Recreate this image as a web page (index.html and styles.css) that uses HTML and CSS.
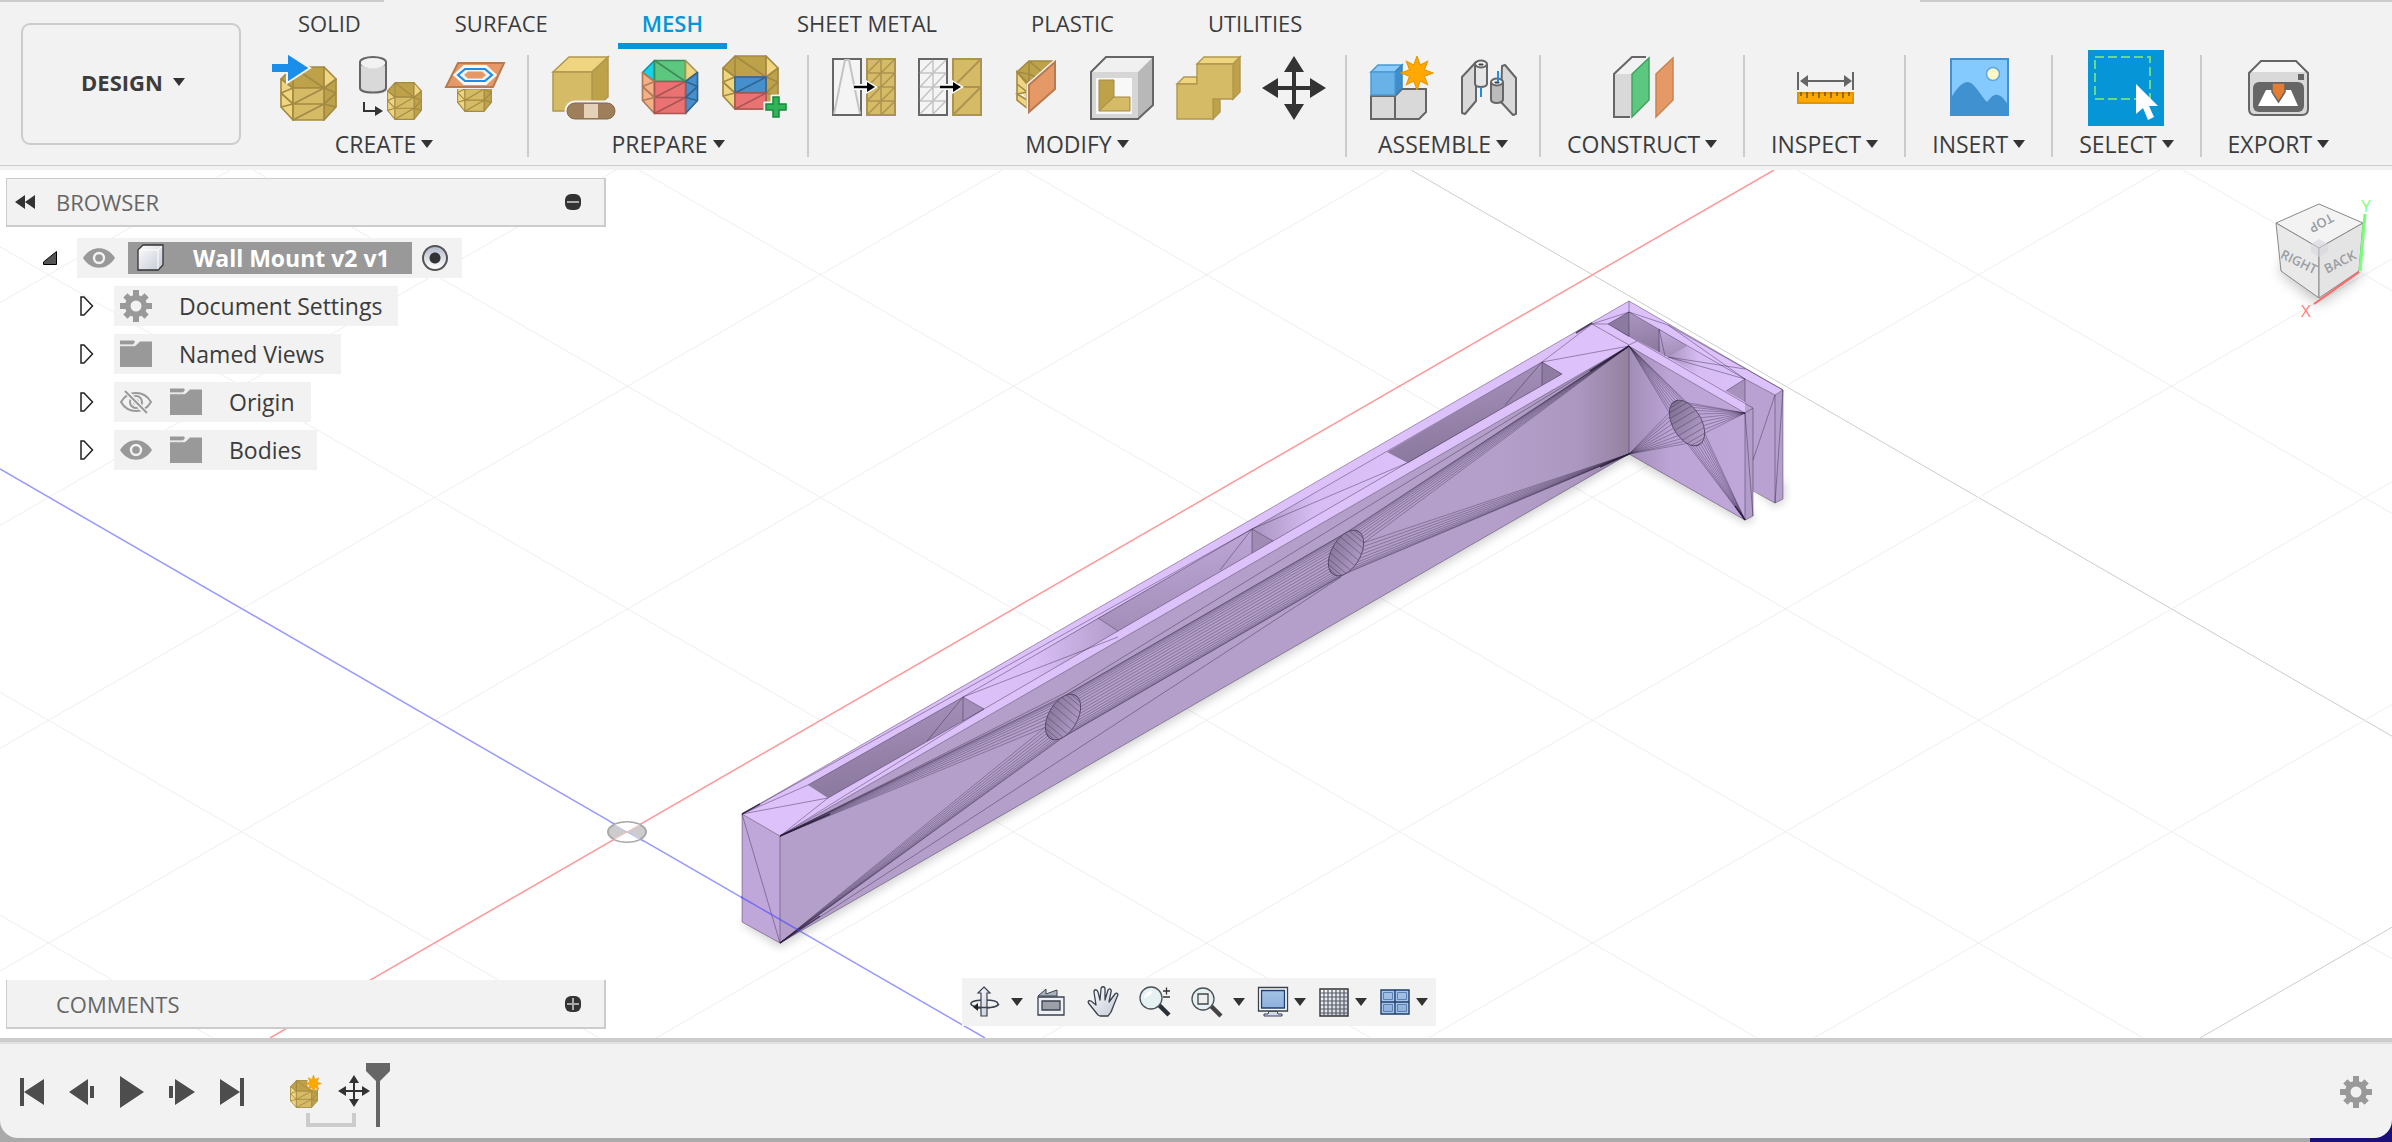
FILE: index.html
```html
<!DOCTYPE html>
<html lang="en">
<head>
<meta charset="utf-8">
<title>Wall Mount v2</title>
<link rel="stylesheet" href="styles.css">
</head>
<body>
<svg class="defs" aria-hidden="true">
  <defs>
    <symbol id="barrel" viewBox="-1 -1 57 55" preserveAspectRatio="none">
      <g stroke="#a38a42" stroke-width="1.7" stroke-linejoin="round">
        <path fill="#bda24a" d="M12 0H43V21H12ZM0 12L12 0V21ZM55 12L43 21V53L55 40Z"/>
        <path fill="#f0d580" d="M43 0L55 12L43 21ZM0 12L12 21V53L0 40Z"/>
        <path fill="#d6bb66" d="M12 21H43V53H12Z"/>
        <path fill="none" d="M12 0L43 21M12 37H43M12 37L43 21M12 53L43 37M12 21L0 26L12 37L0 40M55 26L43 21M55 26L43 37L55 40"/>
      </g>
    </symbol>
    <symbol id="move" viewBox="0 0 64 64">
      <path fill="#333" d="M32 0L42 16H34V30H48V22L64 32L48 42V34H34V48H42L32 64L22 48H30V34H16V42L0 32L16 22V30H30V16H22Z"/>
    </symbol>
    <symbol id="star" viewBox="-16 -16 32 32">
      <path fill="#ffa800" stroke="#e59500" stroke-width="1" d="M0 -16L3 -7.5L10 -11L7 -3L15 0L7 3L10 11L3 7.5L0 16L-3 7.5L-10 11L-7 3L-15 0L-7 -3L-10 -11L-3 -7.5Z"/>
    </symbol>
    <symbol id="gear" viewBox="-16 -16 32 32">
      <g fill="#999"><circle r="11"/><rect x="-3" y="-16" width="6" height="32"/><rect x="-16" y="-3" width="32" height="6"/>
      <rect x="-3" y="-15" width="6" height="30" transform="rotate(45)"/><rect x="-3" y="-15" width="6" height="30" transform="rotate(-45)"/></g>
      <circle r="5.5" fill="#f2f2f2"/>
    </symbol>
    <symbol id="folder" viewBox="0 0 32 32">
      <path fill="#999" d="M0 8H15L20 3.5H32V29H0Z"/><path fill="#999" d="M0 2.500H14L15 4L13 6.500H0Z"/><path d="M0 7.500H14.500L19 3.500" fill="none" stroke="#e8e8e8" stroke-width="1.500"/>
    </symbol>
    <symbol id="eye" viewBox="0 0 32 32">
      <path fill="#999" d="M0 16C8 3 24 3 32 16C24 29 8 29 0 16Z"/><circle cx="16" cy="16" r="5" fill="none" stroke="#f2f2f2" stroke-width="2.400"/>
    </symbol>
    <symbol id="caret" viewBox="0 0 12 8"><path fill="#333" d="M0 0H12L6 8Z"/></symbol>
    <symbol id="twist" viewBox="0 0 14 20"><path fill="#fff" stroke="#222" stroke-width="1.500" d="M1 1H4L12.500 10L4 19H1Z"/></symbol>
    <linearGradient id="silver" x1="0" y1="0" x2="1" y2="1"><stop offset="0" stop-color="#fff"/><stop offset="1" stop-color="#c3c8d4"/></linearGradient>
    <linearGradient id="screen" x1="0" y1="0" x2="0" y2="1"><stop offset="0" stop-color="#a5c2e5"/><stop offset="1" stop-color="#8eb0dc"/></linearGradient>
  </defs>
</svg>

<div class="window">
<header class="header">
  <button class="workspace" type="button">DESIGN <svg class="caret"><use href="#caret"/></svg></button>
  <div class="ribbon">
    <nav class="tabs">
      <a class="tab" href="#solid">SOLID</a>
      <a class="tab" href="#surface">SURFACE</a>
      <a class="tab active" href="#mesh">MESH</a>
      <a class="tab" href="#sheet">SHEET METAL</a>
      <a class="tab" href="#plastic">PLASTIC</a>
      <a class="tab" href="#utilities">UTILITIES</a>
    </nav>
    <div class="groups">
      <section class="group">
        <div class="tools">
          <button class="tool" type="button" aria-label="Insert mesh"><svg viewBox="0 0 76 76"><use href="#barrel" x="14" y="16" width="57" height="55"/><path fill="#1a8ee8" stroke="#f2f2f2" stroke-width="2" d="M5 13H21V3L44 18L21 33V23H5Z"/></svg></button>
          <button class="tool" type="button" aria-label="Tessellate"><svg viewBox="0 0 76 76"><path fill="#d9d9d9" stroke="#666" stroke-width="2" d="M8 12V38C8 44 34 44 34 38V12"/><ellipse cx="21" cy="12" rx="13" ry="5" fill="#f2f2f2" stroke="#666" stroke-width="2"/><path fill="#f2f2f2" d="M9 12H33V14C30 20 12 20 9 14Z"/><path fill="none" stroke="#333" stroke-width="2" d="M12 52V61H25"/><path fill="#333" d="M23 56L31 61L23 66Z"/><use href="#barrel" x="35" y="32" width="35" height="38"/></svg></button>
          <button class="tool" type="button" aria-label="Mesh section sketch"><svg viewBox="0 0 76 76"><svg x="19" y="39" width="35" height="23" viewBox="-1 21 57 33" preserveAspectRatio="none"><use href="#barrel" x="-1" y="-1" width="57" height="55"/></svg><path fill="#e59966" stroke="#b87a50" stroke-width="2" d="M20 13H66L55 37H8Z"/><path fill="none" stroke="#f8f8f8" stroke-width="7" d="M20 25L27 18.500H47L54 25L47 31.500H27Z"/><path fill="#f2f2f2" stroke="#1a8ee8" stroke-width="2.200" d="M20 25L27 19H47L54 25L47 31H27Z"/><path fill="#e59966" d="M26 25L30 21.500H44L48 25L44 28.500H30Z"/></svg></button>
        </div>
        <button class="group-label" type="button">CREATE<svg class="caret"><use href="#caret"/></svg></button>
      </section>
      <span class="sep"></span>
      <section class="group">
        <div class="tools">
          <button class="tool" type="button" aria-label="Repair"><svg viewBox="0 0 76 76"><g stroke="#b0984f" stroke-width="1.500"><path fill="#f0d580" d="M7 22L23 7H62L46 22Z"/><path fill="#bda24a" d="M62 7V47L46 61V22Z"/><path fill="#d6bb66" d="M7 22H46V61H7Z"/></g><rect x="20" y="52" width="50" height="18" rx="9" fill="#9e7f5c" stroke="#f2f2f2" stroke-width="3"/><rect x="21" y="53" width="48" height="16" rx="8" fill="#9e7f5c" stroke="#85694a"/><path fill="#e5d0b8" d="M38 54H52V68H38Z"/></svg></button>
          <button class="tool" type="button" aria-label="Generate face groups"><svg viewBox="0 0 76 76"><g transform="translate(10.500,10.500)" stroke-width="1.700" stroke-linejoin="round"><path fill="#14d3e8" stroke="#1394a3" d="M0 12L12 0V21Z"/><path fill="#5cc77e" stroke="#3f8c58" d="M12 0H43V21H12Z"/><path fill="#f0d580" stroke="#a8955a" d="M43 0L55 12L43 21Z"/><path fill="#f5b184" stroke="#ac7c5d" d="M0 12L12 21V53L0 40Z"/><path fill="#4590cc" stroke="#2f6590" d="M55 12L43 21V53L55 40Z"/><path fill="#eb7272" stroke="#a85555" d="M12 21H43V53H12Z"/><path fill="none" stroke="#a85555" d="M12 37H43M12 37L43 21M12 53L43 37"/><path fill="none" stroke="#3f8c58" d="M12 0L43 21"/><path fill="none" stroke="#ac7c5d" d="M12 21L0 26L12 37L0 40"/><path fill="none" stroke="#2f6590" d="M43 21L55 26L43 37L55 40"/></g></svg></button>
          <button class="tool" type="button" aria-label="Combine face groups"><svg viewBox="0 0 76 76"><use href="#barrel" x="4" y="5" width="57" height="55"/><path fill="#4590cc" stroke="#2f6590" stroke-width="1.500" d="M17 27H48V43H17ZM17 43L48 27"/><path fill="#eb7272" stroke="#a85555" stroke-width="1.500" d="M17 43H48V59H17ZM17 59L48 43"/><path fill="#2fb457" stroke="#f2f2f2" stroke-width="5" d="M55 47H61V54H68V60H61V67H55V60H48V54H55Z"/><path fill="#2fb457" stroke="#16883a" stroke-width="1.500" d="M55 47H61V54H68V60H61V67H55V60H48V54H55Z"/></svg></button>
        </div>
        <button class="group-label" type="button">PREPARE<svg class="caret"><use href="#caret"/></svg></button>
      </section>
      <span class="sep"></span>
      <section class="group">
        <div class="tools">
          <button class="tool" type="button" aria-label="Remesh"><svg viewBox="0 0 76 76"><path fill="#f4f4f4" stroke="#666" stroke-width="2" d="M7 9H35V65H7Z"/><path fill="none" stroke="#c4c4c4" stroke-width="2" d="M8 64L19 10H23L34 64"/><path fill="#d6bb66" stroke="#ab9452" stroke-width="2" d="M41 9H69V65H41Z"/><path fill="none" stroke="#ab9452" stroke-width="1.500" d="M55 9V65M41 23H69M41 37H69M41 51H69M41 23L55 9M55 23L69 9M41 37L55 23M55 37L69 23M41 51L55 37M55 51L69 37M41 65L55 51M55 65L69 51"/><path stroke="#fff" stroke-width="6" d="M28 37H46"/><path fill="#fff" d="M40 30L52 37L40 44Z"/><path stroke="#000" stroke-width="2.500" d="M28 37H44"/><path fill="#000" d="M41 32L49 37L41 42Z"/></svg></button>
          <button class="tool" type="button" aria-label="Reduce"><svg viewBox="0 0 76 76"><path fill="#f4f4f4" stroke="#666" stroke-width="2" d="M7 9H35V65H7Z"/><path fill="none" stroke="#c4c4c4" stroke-width="1.500" d="M21 10V64M8 23H34M8 37H34M8 51H34M8 23L21 10M21 23L34 10M8 37L21 23M21 37L34 23M8 51L21 37M21 51L34 37M8 64L21 51M21 64L34 51"/><path fill="#d6bb66" stroke="#ab9452" stroke-width="2" d="M41 9H69V65H41ZM41 37H69M41 37L69 9M41 65L69 37"/><path stroke="#fff" stroke-width="6" d="M28 37H46"/><path fill="#fff" d="M40 30L52 37L40 44Z"/><path stroke="#000" stroke-width="2.500" d="M28 37H44"/><path fill="#000" d="M41 32L49 37L41 42Z"/></svg></button>
          <button class="tool" type="button" aria-label="Plane cut"><svg viewBox="0 0 76 76"><g stroke="#a38a42" stroke-width="1.600"><path fill="#bda24a" d="M19 22L31 11H57L31 34Z"/><path fill="none" d="M31 11V33M31 11L44 22M31 24L40 28M19 22L31 24"/><path fill="#f0d580" d="M19 22L29 34V58L19 50ZM19 34L29 42L19 44L29 50"/></g><path fill="#e59966" stroke="#f2f2f2" stroke-width="5" d="M31 35L57 12V39L31 62Z"/><path fill="#e59966" stroke="#b87a50" stroke-width="2" d="M31 35L57 12V39L31 62Z"/></svg></button>
          <button class="tool" type="button" aria-label="Shell"><svg viewBox="0 0 76 76"><path fill="#f0f0f0" d="M7 22L22 7H69L54 22Z"/><path fill="#b8b8b8" d="M69 7V55L54 69V22Z"/><path fill="#d6d6d6" d="M7 22H54V69H7Z"/><path fill="none" stroke="#666" stroke-width="2" d="M7 22L22 7H69V55L54 69H7Z"/><path fill="#f8f8f8" d="M12 28H48V64H12Z"/><path fill="#bda24a" stroke="#a38a42" d="M15 30H30V47L15 61Z"/><path fill="#d6bb66" stroke="#a38a42" d="M30 47H46V61H15Z"/></svg></button>
          <button class="tool" type="button" aria-label="Combine"><svg viewBox="0 0 76 76"><g stroke="#b0984f" stroke-width="1.400"><path fill="#f0d580" d="M27 14L34 7H70L63 14ZM7 34L14 27H27V34Z"/><path fill="#bda24a" d="M70 7V42L63 49V14ZM43 49H50V62L43 69Z"/><path fill="#d6bb66" d="M27 14H63V49H43V69H7V34H27Z"/></g></svg></button>
          <button class="tool" type="button" aria-label="Move"><svg viewBox="0 0 76 76"><use href="#move" x="6" y="6" width="64" height="64"/></svg></button>
        </div>
        <button class="group-label" type="button">MODIFY<svg class="caret"><use href="#caret"/></svg></button>
      </section>
      <span class="sep"></span>
      <section class="group">
        <div class="tools">
          <button class="tool" type="button" aria-label="New component"><svg viewBox="0 0 76 76"><path fill="#f2f2f2" d="M31 46L38 39H62L55 46Z"/><path fill="#b8b8b8" d="M62 39V62L55 69V46Z"/><path fill="#d9d9d9" stroke="#666" stroke-width="2" d="M7 46H31V69H7ZM31 46V69H55L62 62V39H38L31 46"/><path fill="#8bcafb" stroke="#4a9ad4" stroke-width="1.500" d="M7 22L14 15H38L31 22Z"/><path fill="#3d8ecb" stroke="#3a82bb" stroke-width="1.500" d="M38 15V38L31 45V22Z"/><path fill="#68b2e8" stroke="#4a9ad4" stroke-width="1.500" d="M7 22H31V45H7Z"/><circle cx="53" cy="23" r="13" fill="#f2f2f2"/><use href="#star" x="36" y="6" width="34" height="34"/></svg></button>
          <button class="tool" type="button" aria-label="Joint"><svg viewBox="0 0 76 76"><g stroke="#666" stroke-width="2" stroke-linejoin="round"><path fill="#d9d9d9" d="M12 27L26 12V51L15 64L12 63Z"/><path fill="#e6e6e6" d="M25 14V34C26 38 36 38 37 34V14"/><ellipse cx="31" cy="14" rx="6" ry="3.500" fill="#f2f2f2"/><path fill="#d9d9d9" d="M52 16L55 15L66 28V64L63 65L51 52Z"/><path fill="#bbb" d="M41 32V50C42 54 51 54 53 50V32"/><ellipse cx="47" cy="32" rx="6" ry="3.500" fill="#f2f2f2"/></g><path fill="#444" d="M29 14H33V15H29ZM45 32H49V33H45Z" stroke="#444"/><path stroke="#1a8ee8" stroke-width="2" d="M31 37V47M48 21V32"/></svg></button>
        </div>
        <button class="group-label" type="button">ASSEMBLE<svg class="caret"><use href="#caret"/></svg></button>
      </section>
      <span class="sep"></span>
      <section class="group">
        <div class="tools">
          <button class="tool" type="button" aria-label="Offset plane"><svg viewBox="0 0 76 76"><path fill="#f2f2f2" d="M10 24L28 7H45L27 24Z"/><path fill="#d9d9d9" d="M10 24H27V67H10Z"/><path fill="none" stroke="#666" stroke-width="2" d="M42 7H28L10 24V67H26"/><path fill="#5cc77e" stroke="#3fa360" stroke-width="1.500" d="M28 24L45 8V50L28 67Z"/><path fill="#e59966" stroke="#c98250" stroke-width="1.500" d="M52 24L69 8V50L52 67Z"/></svg></button>
        </div>
        <button class="group-label" type="button">CONSTRUCT<svg class="caret"><use href="#caret"/></svg></button>
      </section>
      <span class="sep"></span>
      <section class="group">
        <div class="tools">
          <button class="tool" type="button" aria-label="Measure"><svg viewBox="0 0 76 76"><path stroke="#666" stroke-width="2" d="M11 22V40M66 22V40M18 31H60"/><path fill="#666" d="M13 31L21 25V37ZM65 31L57 25V37Z"/><path fill="#ffa800" stroke="#e09400" stroke-width="2" d="M11 43H66V53H11Z"/><path stroke="#6b5a33" stroke-width="1.500" d="M14 42V46M20 42V48M26 42V46M32 42V48M38 42V46M44 42V48M50 42V46M56 42V48M62 42V46"/></svg></button>
        </div>
        <button class="group-label" type="button">INSPECT<svg class="caret"><use href="#caret"/></svg></button>
      </section>
      <span class="sep"></span>
      <section class="group">
        <div class="tools">
          <button class="tool" type="button" aria-label="Insert image"><svg viewBox="0 0 76 76"><path fill="#85caff" stroke="#3f92cf" stroke-width="2" d="M10 9H67V65H10Z"/><circle cx="52" cy="24" r="6.500" fill="#fdf8c8" stroke="#5fa8dd" stroke-width="1.500"/><path fill="#3f92cf" d="M10 48C17 36 22 32 27 32C34 33 39 45 46 52C51 46 53 44 57 45C61 46 64 50 67 55V65H10Z"/></svg></button>
        </div>
        <button class="group-label" type="button">INSERT<svg class="caret"><use href="#caret"/></svg></button>
      </section>
      <span class="sep"></span>
      <section class="group">
        <div class="tools">
          <button class="tool selected" type="button" aria-label="Select"><svg viewBox="0 0 76 76"><rect x="7" y="7" width="55" height="42" fill="none" stroke="#67d98b" stroke-width="2" stroke-dasharray="9 4"/><path fill="#fff" d="M48 34V64L55 58L60 70L66 67L61 56L70 56Z"/></svg></button>
        </div>
        <button class="group-label" type="button">SELECT<svg class="caret"><use href="#caret"/></svg></button>
      </section>
      <span class="sep"></span>
      <section class="group">
        <div class="tools">
          <button class="tool" type="button" aria-label="3D print"><svg viewBox="0 0 76 76"><path fill="#d9d9d9" d="M9 22H68V59C68 63 66 65 62 65H15C11 65 9 63 9 59Z"/><path fill="#f6f6f6" d="M9 22L21 11H56L68 22Z"/><path fill="none" stroke="#666" stroke-width="2" d="M9 23L21 11H56L68 23V59C68 63 66 65 62 65H15C11 65 9 63 9 59Z"/><rect x="13" y="32" width="51" height="30" rx="6" fill="#666"/><path fill="#666" d="M58 24H64V30H58Z"/><path fill="#fff" d="M18 56L26 40H51L58 56Z"/><path fill="#e57c33" stroke="#666" stroke-width="1.500" d="M32 33H45V42L38.500 52L32 42Z"/></svg></button>
        </div>
        <button class="group-label" type="button">EXPORT<svg class="caret"><use href="#caret"/></svg></button>
      </section>
    </div>
  </div>
</header>

<main class="canvas">
  <svg class="scene" viewBox="0 170 2392 868" preserveAspectRatio="xMinYMin slice" role="img" aria-label="Wall mount model">
    <defs>
      <linearGradient id="deep" x1="0" y1="0" x2="0.300" y2="1"><stop offset="0" stop-color="#ab96c1"/><stop offset="1" stop-color="#8a779c"/></linearGradient>
      <linearGradient id="ramp" x1="0" y1="0" x2="1" y2="0"><stop offset="0" stop-color="#dcc1fa"/><stop offset="0.450" stop-color="#d9bef6"/><stop offset="1" stop-color="#b39dcb"/></linearGradient>
      <linearGradient id="ramp2" x1="0" y1="0" x2="1" y2="0"><stop offset="0" stop-color="#a894bf"/><stop offset="0.400" stop-color="#d6bcf3"/><stop offset="1" stop-color="#dcc1fa"/></linearGradient>
      <linearGradient id="mid" x1="0" y1="0" x2="0.200" y2="1"><stop offset="0" stop-color="#c3abde"/><stop offset="1" stop-color="#a28eb7"/></linearGradient>
      <linearGradient id="front" gradientUnits="userSpaceOnUse" x1="1500" y1="0" x2="1629" y2="0"><stop offset="0" stop-color="#b49fca"/><stop offset="0.600" stop-color="#ac97c1"/><stop offset="1" stop-color="#94819f"/></linearGradient>
      <linearGradient id="arm" gradientUnits="userSpaceOnUse" x1="1629" y1="0" x2="1745" y2="0"><stop offset="0" stop-color="#a18db6"/><stop offset="0.350" stop-color="#bca4d6"/><stop offset="1" stop-color="#c0a7da"/></linearGradient>
      <linearGradient id="bore" x1="0" y1="0" x2="1" y2="0.600"><stop offset="0" stop-color="#7d6d90"/><stop offset="1" stop-color="#b09bc6"/></linearGradient>
      <filter id="soft" x="-5%" y="-5%" width="110%" height="110%"><feGaussianBlur stdDeviation="4"/></filter>
      <filter id="cubeshade" x="-50%" y="-50%" width="200%" height="200%"><feGaussianBlur stdDeviation="7"/></filter>
    </defs>
    <g id="grid" fill="none"></g>
    <path stroke="#f99" stroke-width="1.500" d="M1774 170L270 1038"/>
    <path stroke="#99f" stroke-width="1.500" d="M0 469L985 1038"/>
    <g fill="none"><ellipse cx="627" cy="832" rx="19" ry="10" stroke="#aaa" stroke-width="2" fill="#ccc"/><path fill="#fff" d="M627 832L614 825Q627 820 640 825ZM627 832L614 839Q627 844 640 839Z"/><path stroke="#99f" stroke-opacity="0.600" d="M610 822L644 842"/><path stroke="#f99" stroke-opacity="0.600" d="M610 842L644 822"/></g>

    <g filter="url(#soft)" fill="#000" opacity="0.170"><path d="M738 922L780 948L1629 459L1746 524L1756 518L1740 500L1629 440L790 920ZM1755 490L1775 507L1785 501V480Z"/></g>

    <path fill="#dcc1fa" d="M742 814L1629 301L1783 390L1775 395L1745 379L1753 408L1745 413L1629 346L780 836Z"/>
    <path fill="#b9a2d1" d="M1745 379L1775 395V503L1745 486Z"/>
    <path fill="#b49fca" d="M1775 395L1783 390V499L1775 503Z"/>
    <path fill="url(#deep)" d="M808 785L963 697L984 709L828 798Z"/>
    <path fill="#a28db8" d="M963 697L984 709L963 721Z"/>
    <path fill="url(#ramp)" d="M963 697L1098 618L1118 631L984 709Z"/>
    <path fill="url(#mid)" d="M1098 618L1252 529L1273 541L1118 631Z"/>
    <path fill="url(#ramp2)" d="M1252 529L1387 452L1407 463L1273 541Z"/>
    <path fill="#a08bb5" d="M1252 529L1273 541L1252 553Z"/>
    <path fill="url(#deep)" d="M1387 452L1542 362L1562 374L1408 463Z"/>
    <path fill="#8f7ca3" d="M1542 362L1562 374L1542 385Z"/>
    <path fill="#8d7aa0" d="M1608 324L1629 312V337Z"/>
    <path fill="url(#deep)" d="M1629 312L1687 346L1668 357L1629 336Z"/>
    <path fill="url(#mid)" d="M1659 329L1687 346L1668 357L1660 353Z"/>
    <path fill="url(#ramp2)" d="M1687 346L1745 379L1726 391L1668 357Z"/>
    <path fill="#a792bd" d="M1745 379V402L1726 391Z"/>
    <path fill="#c0a7da" d="M742 814L780 836V943L742 922Z"/>
    <path fill="url(#front)" d="M780 836L1629 346V454L780 943Z"/>
    <path fill="url(#arm)" d="M1629 346L1745 413V520L1629 454Z"/>
    <path fill="#b29cc9" d="M1745 413L1753 408V516L1745 520Z"/>
    <g fill="none" stroke="#2d1f3d" stroke-opacity="0.400">
      <path d="M742 814L1629 301L1783 390V499L1775 503V395L1783 390M1775 503L1753 491M742 814L780 836V943L742 922ZM742 814L780 943M780 836L1629 346V454L780 943M1629 346L1745 413V520L1629 454M1745 413L1753 408V516L1745 520M1753 408L1608 324L1629 312L1745 379L1775 395M1745 379V402M1745 379L1726 391"/>
      <path d="M742 814L808 785L963 697L984 709L828 798L742 814M963 697V721M927 741L963 697M742 814L1252 529V553M780 836L984 709L1118 631L1273 541L1407 463L1562 374M780 836L828 798M963 697L1252 529L1542 362V385M1098 618L1118 631M1252 529L1273 541M1220 570L1252 529M1252 529L1407 463M963 697L1118 637M1505 405L1542 362L1629 346M1542 362L1592 324M1592 324L1629 312M1592 324L1608 324M1592 324L1629 345L1637 341M1542 362L1562 374"/>
      <path d="M1629 301V336M1629 312L1668 325L1783 390M1668 325L1745 379M1659 329V352M1659 329L1665 356M1668 357L1745 369M1668 357L1745 379M1745 413L1753 516M1775 503L1783 390M1753 460L1775 395M1629 346L1063 694M780 943L1341 577M780 836L1063 694"/>
      <path stroke-opacity="0.800" stroke-width="1.500" d="M742 814L760 804M780 836L830 814M780 943L820 916M1590 371L1629 346M1600 467L1629 454M1576 333L1592 323M1745 520L1735 506"/>
    </g>
    <g id="mesh-lines" fill="none" stroke="#2d1f3d" stroke-opacity="0.340"></g>
    <g id="bores"></g>
    <path stroke="#44f" stroke-opacity="0.600" stroke-width="1.500" d="M741 897L800 931"/>

    <g>
      <path filter="url(#cubeshade)" fill="#000" opacity="0.250" d="M2280 272L2319 304L2360 276L2350 250H2290Z"/>
      <g stroke="#888" stroke-linejoin="round"><path fill="#f3f3f3" d="M2319 204L2363 223L2319 248L2276 223Z"/><path fill="#e9e9e9" d="M2276 223L2319 248V298L2281 271Z"/><path fill="#e4e4e4" d="M2363 223L2319 248V298L2359 271Z"/></g>
      <path fill="#d3d7de" fill-opacity="0.600" d="M2311 244L2319 239L2328 244V252L2319 257L2311 252Z"/>
      <path stroke="#f66" stroke-width="2" d="M2359 272L2314 304"/><path stroke="#7f7" stroke-width="3" d="M2360 271L2365 214"/>
      <g class="cube-text" text-anchor="middle"><text transform="translate(2297,266) rotate(26)">RIGHT</text><text transform="translate(2342,266) rotate(-27)">BACK</text><text transform="translate(2319,219) rotate(151)">TOP</text></g>
      <text class="axis axis-x" x="2306" y="317" text-anchor="middle">X</text><text class="axis axis-y" x="2366" y="212" text-anchor="middle">Y</text>
    </g>
  </svg>

  <div class="overlay">
    <aside class="browser">
      <div class="panel">
        <button class="collapse" type="button" aria-label="Collapse"><svg viewBox="0 0 20 14"><path fill="#333" d="M0 7L10 0V14ZM10 7L20 0V14Z"/></svg></button>
        <h2>BROWSER</h2>
        <button class="dot" type="button" aria-label="Minimise"><svg viewBox="0 0 16 16"><rect width="16" height="16" rx="6" fill="#333"/><path stroke="#aaa" stroke-width="2" d="M2 8H14"/></svg></button>
      </div>
      <ul class="tree">
        <li class="node root"><button class="twist" type="button" aria-label="Collapse"><svg viewBox="0 0 14 14"><path fill="#555" stroke="#000" d="M13.500 0.500V13.500H0.500V11Z"/></svg></button>
          <div class="row"><svg class="ic"><use href="#eye"/></svg><span class="name"><svg class="ic" viewBox="0 0 32 32"><path fill="url(#silver)" stroke="#333" stroke-width="1.300" d="M4 8L9 3H29V23L24 28H4Z"/><path fill="none" stroke="#fff" d="M5 8H24V27M24 8L28 4"/></svg>Wall Mount v2 v1</span><input class="activate" type="radio" checked aria-label="Activate"></div></li>
        <li class="node"><button class="twist" type="button" aria-label="Expand"><svg><use href="#twist"/></svg></button><div class="row"><svg class="ic"><use href="#gear"/></svg><span class="text">Document Settings</span></div></li>
        <li class="node"><button class="twist" type="button" aria-label="Expand"><svg><use href="#twist"/></svg></button><div class="row"><svg class="ic"><use href="#folder"/></svg><span class="text">Named Views</span></div></li>
        <li class="node"><button class="twist" type="button" aria-label="Expand"><svg><use href="#twist"/></svg></button><div class="row"><svg class="ic" viewBox="0 0 32 32"><g fill="none" stroke="#999" stroke-width="2"><path d="M1 16C8 4 24 4 31 16C24 28 8 28 1 16Z"/><circle cx="16" cy="16" r="6"/><circle cx="16" cy="16" r="2"/></g><path stroke="#f2f2f2" stroke-width="5" d="M6 5L26 27"/><path stroke="#999" stroke-width="2" d="M5 5L27 27"/></svg><svg class="ic"><use href="#folder"/></svg><span class="text">Origin</span></div></li>
        <li class="node"><button class="twist" type="button" aria-label="Expand"><svg><use href="#twist"/></svg></button><div class="row"><svg class="ic"><use href="#eye"/></svg><svg class="ic"><use href="#folder"/></svg><span class="text">Bodies</span></div></li>
      </ul>
    </aside>
    <div class="dock">
      <div class="panel comments">
        <h2>COMMENTS</h2>
        <button class="dot" type="button" aria-label="Expand"><svg viewBox="0 0 16 16"><rect width="16" height="16" rx="6" fill="#333"/><path stroke="#aaa" stroke-width="2" d="M2 8H14M8 2V14"/></svg></button>
      </div>
      <div class="nav">
        <button class="drop wide" type="button" aria-label="Orbit"><svg viewBox="0 0 32 32"><path fill="none" stroke="#3a4150" stroke-width="1.500" d="M10 22C-3 19 0 14 16 14C32 14 34 21 18 22H8"/><path fill="url(#silver)" stroke="#3a4150" stroke-width="1.200" d="M15 1L21 7H18V30H12V7H9Z"/><path fill="none" stroke="#3a4150" stroke-width="1.500" d="M30 18C28 22 18 22 8 21"/><path fill="#222" d="M4 21L9 17V25Z"/></svg><svg class="caret"><use href="#caret"/></svg></button>
        <button class="plain" type="button" aria-label="Look at"><svg viewBox="0 0 32 32"><path fill="#aab2bd" stroke="#3a4150" d="M3 10L11 3V8L22 4V10Z"/><path fill="#eef0f4" stroke="#3a4150" stroke-width="1.300" d="M3 11H29V29H3Z"/><path fill="#9a9fa8" stroke="#3a4150" stroke-width="1.300" d="M7 15H25V24H7Z"/></svg></button>
        <button class="plain" type="button" aria-label="Pan"><svg viewBox="0 0 32 32"><path fill="url(#silver)" stroke="#3a4150" stroke-width="1.300" stroke-linejoin="round" d="M11 29L3 19C0 16 1 14 4 15L9 19L7 6C7 3 10 3 11 6L13 14L14 3C14 0 18 0 18 3L18 14L21 4C22 2 25 3 24 6L22 16L28 8C30 6 32 8 30 11L26 21C25 25 24 27 21 30H13Z"/></svg></button>
        <button class="plain" type="button" aria-label="Zoom"><svg viewBox="0 0 32 32"><path stroke="#2b3038" stroke-width="4.500" d="M20 19L30 29"/><circle cx="12" cy="12" r="11" fill="#e6f1f3" stroke="#4a5258" stroke-width="1.300"/><path fill="#fff" d="M5 12A8 8 0 0 1 14 5Q12 10 5 12Z"/><path stroke="#333" stroke-width="1.300" d="M24 5H31M27.500 1.500V8.500M24 11H31"/></svg></button>
        <button class="drop wide" type="button" aria-label="Fit"><svg viewBox="0 0 32 32"><path stroke="#444" stroke-width="4.500" d="M20 20L30 30"/><circle cx="12" cy="13" r="11" fill="#e6f1f3" stroke="#4a5258" stroke-width="1.300"/><path fill="#eee" stroke="#444" stroke-width="1.300" d="M7 8H17V18H7Z"/></svg><svg class="caret"><use href="#caret"/></svg></button>
        <button class="drop" type="button" aria-label="Display settings"><svg viewBox="0 0 32 32"><path fill="#d5dbe5" stroke="#3a4150" d="M12 25H20L21 28H25V30H7V28H11Z"/><path fill="#fff" stroke="#3a4150" stroke-width="1.300" d="M1.500 1.500H30.500V25H1.500Z"/><path fill="url(#screen)" stroke="#1e406e" stroke-width="1.300" d="M4.500 4.500H27.500V22H4.500Z"/></svg><svg class="caret"><use href="#caret"/></svg></button>
        <button class="drop" type="button" aria-label="Grid settings"><svg viewBox="0 0 32 32"><path fill="url(#silver)" stroke="#333" stroke-width="1.400" d="M2 3H30V30H2Z"/><path stroke="#555a66" stroke-width="1.200" d="M6 3V30M10 3V30M14 3V30M18 3V30M22 3V30M26 3V30M2 7H30M2 11H30M2 15H30M2 19H30M2 23H30M2 27H30"/></svg><svg class="caret"><use href="#caret"/></svg></button>
        <button class="drop" type="button" aria-label="Viewports"><svg viewBox="0 0 32 32"><path fill="#a9c4e6" stroke="#1e406e" stroke-width="1.400" d="M2 4H30V28H2ZM16 4V28M2 16H30"/><path fill="url(#screen)" stroke="#5b82b5" d="M4.500 6.500H13.500V13.500H4.500ZM18.500 6.500H27.500V13.500H18.500ZM4.500 18.500H13.500V25.500H4.500ZM18.500 18.500H27.500V25.500H18.500Z"/></svg><svg class="caret"><use href="#caret"/></svg></button>
      </div>
    </div>
  </div>
</main>

<footer class="timeline">
  <div class="playback">
    <button type="button" aria-label="Start"><svg viewBox="0 0 32 32"><path fill="#4d4d4d" d="M4 2H8V30H4ZM8 16L28 3V29Z"/></svg></button>
    <button type="button" aria-label="Back"><svg viewBox="0 0 32 32"><path fill="#4d4d4d" d="M3 16L22 3V29ZM24 10H28V22H24Z"/></svg></button>
    <button type="button" aria-label="Play"><svg viewBox="0 0 32 32"><path fill="#4d4d4d" d="M4 0L28 16L4 32Z"/></svg></button>
    <button type="button" aria-label="Forward"><svg viewBox="0 0 32 32"><path fill="#4d4d4d" d="M29 16L9 3V29ZM3 10H7V22H3Z"/></svg></button>
    <button type="button" aria-label="End"><svg viewBox="0 0 32 32"><path fill="#4d4d4d" d="M28 2H24V30H28ZM24 16L4 3V29Z"/></svg></button>
  </div>
  <div class="track">
    <button type="button" aria-label="Base mesh"><svg viewBox="0 0 34 34"><use href="#barrel" x="2" y="5" width="28" height="28"/><circle cx="26" cy="8" r="7" fill="#f2f2f2"/><use href="#star" x="17" y="0" width="17" height="17"/></svg></button>
    <button type="button" aria-label="Move feature"><svg viewBox="0 0 34 34"><use href="#move" x="1" y="0" width="32" height="32"/></svg></button>
    <span class="bracket"></span>
    <svg class="marker" viewBox="0 0 24 64"><path fill="#666" d="M0 0H24V8L14 18V64H10V18L0 8Z"/></svg>
  </div>
  <button class="settings" type="button" aria-label="Timeline settings"><svg><use href="#gear"/></svg></button>
</footer>
</div>
<script src="scene.js"></script>
</body>
</html>
```
FILE: styles.css
```css
* { box-sizing: border-box; }

body {
  margin: 0;
  min-height: 100vh;
  padding-bottom: 4px;
  background: linear-gradient(90deg, #aaa 0 calc(100% - 82px), #1b0f78 calc(100% - 82px));
  font-family: "Open Sans", "Noto Sans", sans-serif;
  font-size: 22px;
  line-height: 30px;
  color: #3c3c3c;
}

button {
  margin: 0;
  padding: 0;
  border: 0;
  background: none;
  font: inherit;
  color: inherit;
}

h2, ul { margin: 0; padding: 0; font: inherit; list-style: none; }
svg { display: block; }
.defs { position: absolute; width: 0; height: 0; }
.caret { flex: none; width: 12px; height: 8px; }

.window {
  display: flex;
  flex-direction: column;
  min-height: calc(100vh - 4px);
  border-radius: 0 0 18px 18px;
  background: #f2f2f2;
  overflow: hidden;
}

/* toolbar */
.header {
  display: flex;
  height: 166px;
  padding-left: 21px;
  border-bottom: 1px solid #ccc;
  background:
    linear-gradient(#ccc, #ccc) 0 0 / 384px 2px no-repeat,
    linear-gradient(#ccc, #ccc) 100% 0 / 472px 2px no-repeat,
    #f2f2f2;
}
.workspace {
  display: flex;
  flex: none;
  align-items: center;
  justify-content: center;
  gap: 10px;
  width: 220px;
  height: 122px;
  margin-top: 23px;
  padding: 0 0 4px 4px;
  border: 2px solid #ccc;
  border-radius: 9px;
  font-weight: 700;
}
.ribbon { flex: 1; min-width: 0; }
.tabs { display: flex; gap: 46px; height: 50px; padding-left: 33px; }
.tab {
  height: 49px;
  padding: 8px 24px 5px;
  border-bottom: 6px solid transparent;
  color: inherit;
  text-decoration: none;
  white-space: nowrap;
}
.tab.active { color: #0696d7; border-color: #0696d7; font-weight: 600; }
.groups { display: flex; }
.group {
  display: flex;
  flex-direction: column;
  align-items: center;
  gap: 3px;
}
.sep { flex: none; width: 2px; height: 102px; margin-top: 5px; background: #ccc; }
.tools { display: flex; gap: 10px; padding: 0 13px 0 17px; }
.group:first-child .tools { padding-left: 25px; }
.tool { width: 76px; height: 76px; }
.tool:only-child { margin-right: 4px; }
.tool.selected { background: #0696d7; }
.group-label {
  display: flex;
  align-items: center;
  gap: 5px;
  padding: 0 26px;
  font-size: 23px;
  white-space: nowrap;
}

/* modelling canvas */
.canvas {
  position: relative;
  display: flex;
  flex: 1;
  border-top: 4px solid #f2f2f2;
  background: #fff;
  overflow: hidden;
}
.scene { position: absolute; inset: 0; width: 100%; height: 100%; }
.cube-text { font-size: 13px; font-weight: 600; fill: #9a9da3; }
.axis { font-size: 17px; }
.axis-x { fill: #ff7f7f; }
.axis-y { fill: #7fff7f; }
.overlay {
  position: relative;
  display: flex;
  flex: 1;
  flex-direction: column;
  justify-content: space-between;
  padding: 8px 6px 9px;
}
.panel {
  display: flex;
  align-items: center;
  width: 600px;
  height: 49px;
  padding: 0 23px 0 8px;
  border: solid #ccc;
  border-width: 1px 2px 2px 1px;
  background: #f2f2f2;
  color: #666;
}
.panel h2 { flex: 1; padding-left: 21px; }
.collapse svg { width: 20px; height: 14px; }
.dot svg { width: 16px; height: 16px; }
.comments { border-top-width: 0; }
.comments h2 { padding-left: 41px; }

.tree { display: flex; flex-direction: column; gap: 8px; padding-top: 11px; font-size: 23px; }
.node { display: flex; align-items: center; gap: 20px; padding-left: 74px; }
.node.root { padding-left: 37px; }
.twist svg { width: 14px; height: 20px; }
.root .twist svg { height: 14px; }
.row {
  display: flex;
  align-items: center;
  gap: 18px;
  height: 40px;
  padding: 0 16px 0 6px;
  background: #f2f2f2;
}
.ic { flex: none; width: 32px; height: 32px; }
.text { padding-left: 9px; }
.root .row { gap: 10px; padding-right: 14px; }
.name {
  display: flex;
  align-items: center;
  gap: 27px;
  height: 32px;
  margin-left: 3px;
  padding: 0 22px 0 6px;
  background: #999;
  color: #fff;
  font-weight: 700;
}
.activate {
  appearance: none;
  width: 26px;
  height: 26px;
  margin: 0;
  border: 2px solid #555;
  border-radius: 50%;
  background: radial-gradient(circle, #333 0 5px, transparent 6px), linear-gradient(#b4bccd, #fff);
}

.dock { display: grid; grid-template-columns: 1fr auto 1fr; align-items: end; }
.nav {
  display: flex;
  align-items: center;
  gap: 12px;
  height: 48px;
  margin: 0 0 3px 6px;
  padding: 0 8px 0 7px;
  background: #f2f2f2;
}
.nav svg:first-child { width: 32px; height: 32px; }
.plain { padding-right: 8px; }
.drop { display: flex; align-items: center; gap: 5px; }
.drop.wide { gap: 10px; }

/* timeline */
.timeline {
  display: flex;
  align-items: center;
  height: 100px;
  padding: 4px 20px 0 16px;
  border-top: 4px solid #ccc;
  box-shadow: inset 0 2px #e0e0e0;
}
.playback { display: flex; gap: 18px; }
.playback svg, .settings svg { width: 32px; height: 32px; }
.track { position: relative; display: flex; flex: 1; gap: 15px; margin-left: 40px; }
.track button svg { width: 34px; height: 34px; }
.bracket {
  position: absolute;
  left: 18px;
  top: 38px;
  width: 50px;
  height: 14px;
  border: solid #ccc;
  border-width: 0 4px 4px;
}
.marker { position: absolute; left: 78px; top: -12px; width: 24px; height: 64px; }
```
FILE: scene.js
```js
const NS = 'http://www.w3.org/2000/svg';

function draw(parent, name, attrs) {
  const el = document.createElementNS(NS, name);
  for (const key in attrs) el.setAttribute(key, attrs[key]);
  parent.appendChild(el);
  return el;
}

// Isometric ground grid: both families of lines leave the top edge 386 apart.
const grid = document.getElementById('grid');
const RUN = 1504;
for (let i = -4; i < 10; i++) {
  const down = -519 + i * 386;
  const up = 1774 + (i - 4) * 386;
  draw(grid, 'path', { d: `M${down} 170L${down + RUN} 1038`, stroke: i === 5 ? '#ccc' : '#eee' });
  draw(grid, 'path', { d: `M${up} 170L${up - RUN} 1038`, stroke: i === 9 ? '#ccc' : '#eee' });
}

// Screw holes are circles on a vertical plane; slope tells which way it faces.
const R = 20.4;
const holes = [
  { x: 1063, y: 717, slope: -0.5 },
  { x: 1346, y: 553, slope: -0.5 },
  { x: 1687, y: 423, slope: 0.5 },
];
function rim(hole, deg) {
  const t = deg * Math.PI / 180;
  return [hole.x + R * 0.866 * Math.cos(t), hole.y + R * (hole.slope * Math.cos(t) + Math.sin(t))];
}

const mesh = document.getElementById('mesh-lines');
function fan(x, y, hole, from, to) {
  let d = '';
  for (let i = 0; i <= 9; i++) d += `M${x} ${y}L${rim(hole, from + (to - from) * i / 9).join(' ')}`;
  draw(mesh, 'path', { d });
}
fan(780, 836, holes[0], 180, 270);
fan(780, 943, holes[0], 90, 180);
fan(1629, 346, holes[1], -90, 0);
fan(1629, 454, holes[1], 0, 90);
fan(1629, 346, holes[2], 180, 270);
fan(1745, 413, holes[2], -90, 0);
fan(1745, 520, holes[2], 0, 90);
fan(1629, 454, holes[2], 90, 180);
let bridge = '';
for (let a = -90; a <= 90; a += 9) {
  bridge += `M${rim(holes[0], a).join(' ')}L${rim(holes[1], 180 - a).join(' ')}`;
}
draw(mesh, 'path', { d: bridge });

const bores = document.getElementById('bores');
holes.forEach((hole, n) => {
  const points = [];
  for (let a = 0; a < 360; a += 10) points.push(rim(hole, a).join(','));
  const clip = draw(bores, 'clipPath', { id: 'bore-clip-' + n });
  draw(clip, 'polygon', { points: points.join(' ') });
  draw(bores, 'polygon', { points: points.join(' '), fill: 'url(#bore)', stroke: '#5a4a6c' });
  let d = '';
  for (let a = 0; a < 360; a += 15) {
    const p = rim(hole, a);
    const steep = hole.slope < 0 ? 20 : -14;
    d += `M${p[0]} ${p[1]}l-24 ${-steep}`;
  }
  draw(bores, 'path', { d, stroke: '#2d1f3d', 'stroke-opacity': 0.35, 'clip-path': `url(#bore-clip-${n})` });
});
```
